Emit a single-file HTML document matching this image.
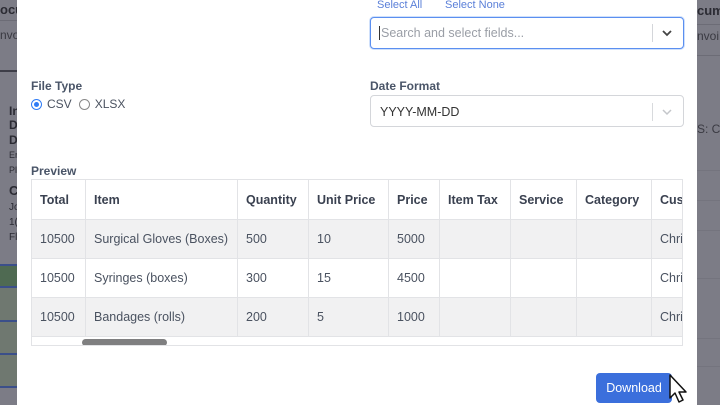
<!DOCTYPE html>
<html><head><meta charset="utf-8"><style>
*{box-sizing:border-box;margin:0;padding:0}
body{width:720px;height:405px;overflow:hidden;position:relative;background:#7c7c86;font-family:"Liberation Sans",sans-serif;color:#3a4250}
.bg{position:absolute;font-size:12px;color:#2b2b33;white-space:nowrap}
.modal{position:absolute;left:17px;top:0;width:680px;height:405px;background:#fff}
.lbl{position:absolute;font-size:12px;font-weight:bold;color:#4a5568}
.sel{position:absolute;border:1px solid #d4d6da;border-radius:4px;background:#fff;font-size:12.5px}
table{border-collapse:collapse;font-size:12.5px;table-layout:fixed}
td,th{border:1px solid #e2e3e6;padding:0 0 0 8px;text-align:left;white-space:nowrap;overflow:hidden;color:#4a5260}
th{height:40px;font-weight:bold;color:#3a4150}
td{height:39px}
tr.g td{background:#f1f1f2}
</style></head><body>
<div class="bg" style="left:0;top:2px;font-weight:bold;font-size:13px">ocu</div>
<div style="position:absolute;left:0;top:20px;width:17px;height:1px;background:#6c6c76"></div>
<div class="bg" style="left:0;top:28px;color:#3a3a42">nvo</div>
<div style="position:absolute;left:0;top:70px;width:17px;height:2px;background:#3e3e48"></div>
<div class="bg" style="left:9px;top:104px;font-weight:bold">In</div>
<div class="bg" style="left:9px;top:118px;font-weight:bold">D</div>
<div class="bg" style="left:9px;top:133px;font-weight:bold">D</div>
<div class="bg" style="left:9px;top:150px;font-size:9px">Er</div>
<div class="bg" style="left:9px;top:165px;font-size:9px">Pl</div>
<div class="bg" style="left:9px;top:183px;font-weight:bold;font-size:13px">C</div>
<div class="bg" style="left:9px;top:202px;font-size:10px">Jo</div>
<div class="bg" style="left:9px;top:217px;font-size:10px">1(</div>
<div class="bg" style="left:9px;top:232px;font-size:10px">Fl</div>
<div style="position:absolute;left:0;top:264px;width:17px;height:124px;background:#6f7870"></div>
<div style="position:absolute;left:0;top:264px;width:17px;height:23px;background:#4f6a52"></div>
<div style="position:absolute;left:0;top:264px;width:17px;height:2px;background:#3b4f8a"></div>
<div style="position:absolute;left:0;top:286px;width:17px;height:2px;background:#3b4f8a"></div>
<div style="position:absolute;left:0;top:320px;width:17px;height:2px;background:#3b4f8a"></div>
<div style="position:absolute;left:0;top:353px;width:17px;height:2px;background:#3b4f8a"></div>
<div style="position:absolute;left:0;top:386px;width:17px;height:2px;background:#3b4f8a"></div>
<div class="bg" style="left:697px;top:3px;font-weight:bold;font-size:13px">cum</div>
<div style="position:absolute;left:697px;top:24px;width:23px;height:1px;background:#6c6c76"></div>
<div class="bg" style="left:697px;top:29px;color:#3a3a42">nvoi</div>
<div style="position:absolute;left:697px;top:55px;width:23px;height:1px;background:#6c6c76"></div>
<div class="bg" style="left:697px;top:122px;color:#3a3a42">S: Cl</div>
<div style="position:absolute;left:697px;top:170px;width:23px;height:1px;background:#74747e"></div>
<div style="position:absolute;left:697px;top:200px;width:23px;height:1px;background:#74747e"></div>
<div style="position:absolute;left:697px;top:230px;width:23px;height:1px;background:#74747e"></div>
<div style="position:absolute;left:697px;top:278px;width:23px;height:1px;background:#74747e"></div>
<div style="position:absolute;left:697px;top:338px;width:23px;height:1px;background:#74747e"></div>
<div style="position:absolute;left:697px;top:366px;width:23px;height:1px;background:#74747e"></div>

<div class="modal">
  <div style="position:absolute;left:360px;top:-1px;font-size:11px;color:#5a7fd8">Select All</div>
  <div style="position:absolute;left:428px;top:-1px;font-size:11px;color:#5a7fd8">Select None</div>
  <div class="sel" style="left:353px;top:17px;width:314px;height:32px;border:1.5px solid #5b8ff0;box-shadow:0 0 0 1px #cfe0fb">
    <div style="position:absolute;left:8px;top:8px;width:1px;height:14px;background:#333"></div>
    <div style="position:absolute;left:10px;top:8px;color:#9a9ea6">Search and select fields...</div>
    <div style="position:absolute;left:281px;top:6px;width:1px;height:18px;background:#d4d6da"></div>
    <svg style="position:absolute;left:290px;top:10px" width="12" height="10" viewBox="0 0 12 10"><path d="M2 3l4 4 4-4" fill="none" stroke="#444" stroke-width="1.8"/></svg>
  </div>
  <div class="lbl" style="left:14px;top:79px">File Type</div>
  <div style="position:absolute;left:14px;top:97px;font-size:12px;color:#4a5260;display:flex;align-items:center">
    <span style="width:11px;height:11px;border-radius:50%;border:1px solid #2f7cf6;display:inline-block;position:relative;background:#fff"><span style="position:absolute;left:2px;top:2px;width:5px;height:5px;border-radius:50%;background:#2f7cf6"></span></span>
    <span style="margin-left:5px">CSV</span>
    <span style="width:11px;height:11px;border-radius:50%;border:1px solid #888;display:inline-block;margin-left:7px"></span>
    <span style="margin-left:5px">XLSX</span>
  </div>
  <div class="lbl" style="left:353px;top:79px">Date Format</div>
  <div class="sel" style="left:353px;top:95px;width:314px;height:32px">
    <div style="position:absolute;left:9px;top:9px;color:#333">YYYY-MM-DD</div>
    <div style="position:absolute;left:281px;top:7px;width:1px;height:18px;background:#d8dadd"></div>
    <svg style="position:absolute;left:290px;top:11px" width="12" height="10" viewBox="0 0 12 10"><path d="M2 3l4 4 4-4" fill="none" stroke="#c4c6ca" stroke-width="1.5"/></svg>
  </div>
  <div class="lbl" style="left:14px;top:164px">Preview</div>
  <div style="position:absolute;left:14px;top:179px;width:652px;height:167px;border:1px solid #e2e3e6;overflow:hidden">
    <table style="width:700px;margin:-1px 0 0 -1px">
      <colgroup><col style="width:54px"><col style="width:152px"><col style="width:71px"><col style="width:80px"><col style="width:51px"><col style="width:71px"><col style="width:66px"><col style="width:75px"><col style="width:80px"></colgroup>
      <tr><th>Total</th><th>Item</th><th>Quantity</th><th>Unit Price</th><th>Price</th><th>Item Tax</th><th>Service</th><th>Category</th><th>Cust</th></tr>
      <tr class="g"><td>10500</td><td>Surgical Gloves (Boxes)</td><td>500</td><td>10</td><td>5000</td><td></td><td></td><td></td><td>Chri</td></tr>
      <tr><td>10500</td><td>Syringes (boxes)</td><td>300</td><td>15</td><td>4500</td><td></td><td></td><td></td><td>Chri</td></tr>
      <tr class="g"><td>10500</td><td>Bandages (rolls)</td><td>200</td><td>5</td><td>1000</td><td></td><td></td><td></td><td>Chri</td></tr>
    </table>
    <div style="position:absolute;left:50px;top:159px;width:85px;height:7px;border-radius:4px;background:#7f7f80"></div>
  </div>
  <div style="position:absolute;left:579px;top:373px;width:76px;height:30px;background:#3b6fdc;border-radius:4px;color:#fff;font-size:12.5px;text-align:center;line-height:30px">Download</div>
  <svg style="position:absolute;left:651px;top:374px" width="22" height="31" viewBox="0 0 22 31"><path d="M2 1v23l5-5 4 9 4-2-4-8h7z" fill="#fff" stroke="#111" stroke-width="1.5" stroke-linejoin="round"/></svg>
</div>
</body></html>
